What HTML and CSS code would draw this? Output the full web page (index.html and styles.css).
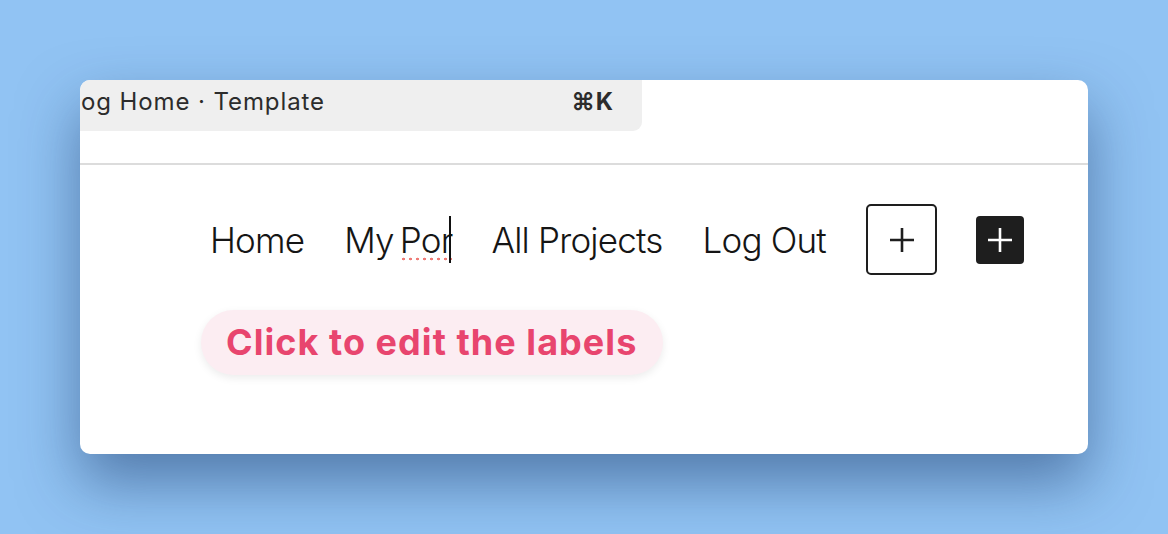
FILE: index.html
```html
<!DOCTYPE html>
<html>
<head>
<meta charset="utf-8">
<link rel="stylesheet" href="styles.css">
</head>
<body>
<div class="window">
  <div class="header">
    <div class="tab">
      <span class="tab-title">og Home · Template</span>
      <span class="tab-kbd">⌘K</span>
    </div>
  </div>
  <div class="main">
    <nav class="nav">
      <span class="nav-item">Home</span>
      <span class="nav-item editing">My <span class="spell">Por</span><span class="caret"></span></span>
      <span class="nav-item">All Projects</span>
      <span class="nav-item">Log Out</span>
      <span class="btn-outline">
        <svg width="26" height="26" viewBox="0 0 26 26"><path d="M13 1v24M1 13h24" stroke="#1e1e1e" stroke-width="2.6" fill="none"/></svg>
      </span>
      <span class="btn-solid">
        <svg width="26" height="26" viewBox="0 0 26 26"><path d="M13 1v24M1 13h24" stroke="#fff" stroke-width="2.6" fill="none"/></svg>
      </span>
    </nav>
    <div class="hint">Click to edit the labels</div>
  </div>
</div>
</body>
</html>
```

FILE: styles.css
```css
html, body {
  margin: 0;
  padding: 0;
}
body {
  background: #91c3f3;
  width: 1168px;
  height: 534px;
  overflow: hidden;
  font-family: "Inter", "Liberation Sans", sans-serif;
}
.window {
  margin: 80px 0 0 80px;
  width: 1008px;
  height: 374px;
  background: #fff;
  border-radius: 10px;
  overflow: hidden;
  box-shadow: 0 28px 60px rgba(20, 50, 100, 0.5);
}
.header {
  height: 83px;
  border-bottom: 2px solid #dcdcdc;
}
.tab {
  width: 562px;
  height: 51px;
  background: #efefef;
  border-bottom-right-radius: 9px;
  display: flex;
  align-items: center;
  justify-content: space-between;
  box-sizing: border-box;
  padding: 0 28px 9px 1px;
  color: #2c2c2c;
  font-size: 24px;
}
.tab-title {
  letter-spacing: 0.9px;
}
.tab-kbd {
  font-weight: 700;
  font-size: 24px;
  letter-spacing: 1px;
}
.main {
  padding-top: 39px;
}
.nav {
  display: flex;
  justify-content: flex-end;
  align-items: center;
  gap: 40px;
  padding-right: 64px;
  height: 71px;
}
.nav-item {
  font-size: 35px;
  font-weight: 300;
  color: #151515;
  letter-spacing: -0.8px;
  white-space: nowrap;
}
.editing {
  display: inline-flex;
  align-items: center;
}
.spell {
  margin-left: 6px;
  background-image: radial-gradient(circle, #ef7b76 1.2px, transparent 1.6px);
  background-size: 7px 4px;
  background-repeat: repeat-x;
  background-position: 0 100%;
}
.caret {
  display: inline-block;
  width: 2px;
  height: 47px;
  background: #111;
  margin-left: -3px;
}
.btn-outline {
  width: 71px;
  height: 71px;
  box-sizing: border-box;
  border: 2px solid #1e1e1e;
  border-radius: 5px;
  display: flex;
  align-items: center;
  justify-content: center;
}
.btn-solid {
  width: 48px;
  height: 48px;
  background: #1e1e1e;
  border-radius: 4px;
  display: flex;
  align-items: center;
  justify-content: center;
  margin-left: -1px;
}
.hint {
  display: inline-block;
  margin: 35px 0 0 121px;
  height: 65px;
  line-height: 65px;
  padding: 0 26px 0 25px;
  background: #fcedf2;
  border-radius: 33px;
  color: #e8456e;
  font-weight: 700;
  font-size: 36px;
  letter-spacing: 1.05px;
  box-shadow: 0 3px 8px rgba(0, 0, 0, 0.08);
}
```
